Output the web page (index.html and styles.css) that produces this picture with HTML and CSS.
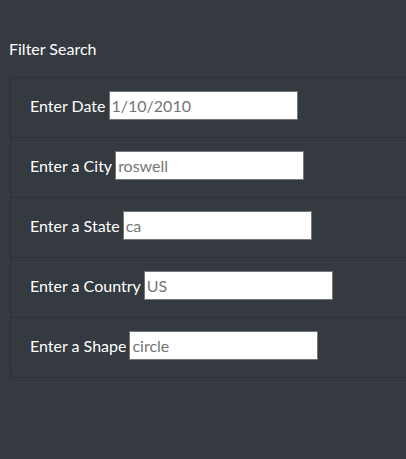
FILE: index.html
```html
<!DOCTYPE html>
<html>
<head>
<meta charset="utf-8">
<link rel="stylesheet" href="styles.css">
</head>
<body>
<div class="page">
  <div class="title">Filter Search</div>
  <ul class="filters">
    <li class="filter"><label>Enter Date</label><input type="text" value="1/10/2010"></li>
    <li class="filter"><label>Enter a City</label><input type="text" value="roswell"></li>
    <li class="filter"><label>Enter a State</label><input type="text" value="ca"></li>
    <li class="filter"><label>Enter a Country</label><input type="text" value="US"></li>
    <li class="filter"><label>Enter a Shape</label><input type="text" value="circle"></li>
  </ul>
</div>
</body>
</html>
```
FILE: styles.css
```css
html, body {
  margin: 0;
  padding: 0;
  background: #343a40;
  height: 100%;
}
body {
  font-family: "Lato", "Noto Sans", sans-serif;
  color: #fff;
  font-size: 16px;
}
.page {
  padding: 38px 0 0 9px;
  height: 100%;
  box-sizing: border-box;
  overflow: hidden;
}
.title {
  font-size: 16px;
  line-height: 22px;
  height: 22px;
}
.filters {
  list-style: none;
  margin: 17px -40px 0 1px;
  padding: 0;
  border: 1px solid rgba(0,0,0,0.14);
  border-radius: 4px;
}
.filter {
  display: flex;
  align-items: flex-start;
  box-sizing: border-box;
  height: 60px;
  padding: 13px 0 0 19px;
  border-top: 1px solid rgba(0,0,0,0.14);
}
.filter:first-child {
  border-top: none;
  height: 59px;
  padding-top: 13px;
}
.filter label {
  line-height: 29px;
  margin-right: 3px;
}
.filter input {
  width: 189px;
  height: 29px;
  box-sizing: border-box;
  border: 1px solid #767676;
  padding: 0 2px;
  font-family: inherit;
  font-size: 16px;
  color: #757575;
  background: #fff;
  outline: none;
}
```
